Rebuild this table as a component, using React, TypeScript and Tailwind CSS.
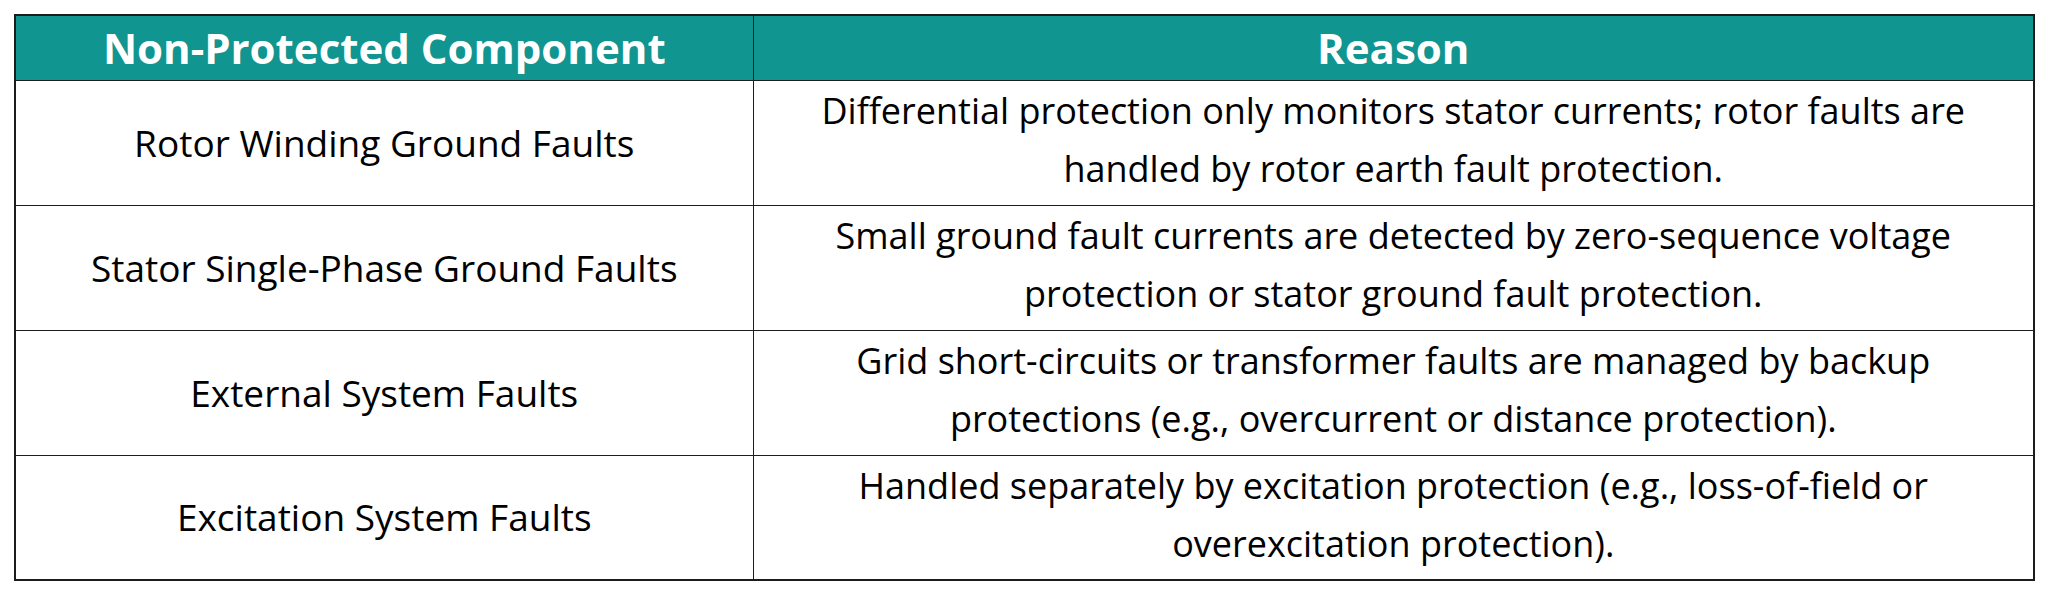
const ROWS: { component: string; reason: string[] }[] = [
  {
    component: "Rotor Winding Ground Faults",
    reason: [
      "Differential protection only monitors stator currents; rotor faults are",
      "handled by rotor earth fault protection.",
    ],
  },
  {
    component: "Stator Single-Phase Ground Faults",
    reason: [
      "Small ground fault currents are detected by zero-sequence voltage",
      "protection or stator ground fault protection.",
    ],
  },
  {
    component: "External System Faults",
    reason: [
      "Grid short-circuits or transformer faults are managed by backup",
      "protections (e.g., overcurrent or distance protection).",
    ],
  },
  {
    component: "Excitation System Faults",
    reason: [
      "Handled separately by excitation protection (e.g., loss-of-field or",
      "overexcitation protection).",
    ],
  },
]

export default function App() {
  return (
    <div
      className="h-[592px] w-[2048px] bg-white pl-[14px] pt-[14px] text-black"
      style={{ fontFamily: '"Open Sans", "Noto Sans", sans-serif' }}
    >
      <table className="w-[2021px] table-fixed border-collapse border-2 border-[#1c1c1c]">
        <colgroup>
          <col className="w-[738px]" />
          <col />
        </colgroup>
        <thead>
          <tr className="h-[65px] bg-[#109591] text-white">
            <th className="border-[1.5px] border-[#1c1c1c] text-[42px] font-bold leading-none">
              Non-Protected Component
            </th>
            <th className="border-[1.5px] border-[#1c1c1c] text-[42px] font-bold leading-none">
              Reason
            </th>
          </tr>
        </thead>
        <tbody>
          {ROWS.map((r) => (
            <tr key={r.component} className="h-[125px]">
              <td className="border-[1.5px] border-[#1c1c1c] text-center text-[37px] leading-[58px]">
                {r.component}
              </td>
              <td className="border-[1.5px] border-[#1c1c1c] pb-[5px] text-center text-[36px] leading-[58px]">
                {r.reason.map((line) => (
                  <div key={line} className="whitespace-nowrap">{line}</div>
                ))}
              </td>
            </tr>
          ))}
        </tbody>
      </table>
    </div>
  )
}
